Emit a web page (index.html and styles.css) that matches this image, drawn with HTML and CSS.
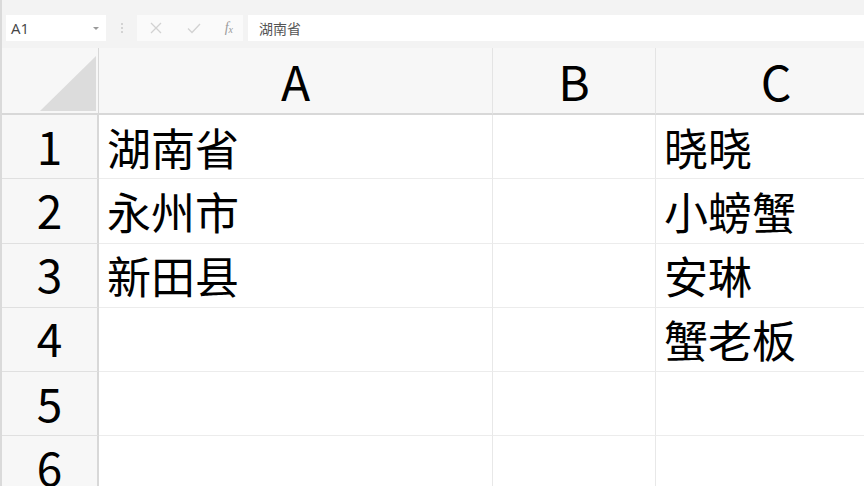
FILE: index.html
```html
<!DOCTYPE html>
<html>
<head>
<meta charset="utf-8">
<link rel="stylesheet" href="styles.css">
</head>
<body>
<div class="app">
  <div class="toolbar">
    <div class="namebox">
      <span class="ref">A1</span>
      <svg class="caret" width="8" height="5" viewBox="0 0 8 5"><path d="M1 1 L4 4 L7 1 Z" fill="#9a9a9a"/></svg>
    </div>
    <div class="grip"><span></span><span></span><span></span></div>
    <div class="fxgroup">
      <svg width="14" height="14" viewBox="0 0 14 14"><path d="M2 2 L12 12 M12 2 L2 12" stroke="#d2d2d2" stroke-width="1.3" fill="none"/></svg>
      <svg width="16" height="14" viewBox="0 0 16 14"><path d="M2 7.5 L6 11.5 L14 3" stroke="#d2d2d2" stroke-width="1.3" fill="none"/></svg>
      <span class="fx">f<sub>x</sub></span>
    </div>
    <div class="formula">湖南省</div>
  </div>
  <div class="sheet">
    <div class="corner"><div class="tri"></div></div>
    <div class="colhead">A</div>
    <div class="colhead">B</div>
    <div class="colhead last">C</div>

    <div class="rowhead">1</div>
    <div class="cell">湖南省</div>
    <div class="cell"></div>
    <div class="cell last">晓晓</div>

    <div class="rowhead">2</div>
    <div class="cell">永州市</div>
    <div class="cell"></div>
    <div class="cell last">小螃蟹</div>

    <div class="rowhead">3</div>
    <div class="cell">新田县</div>
    <div class="cell"></div>
    <div class="cell last">安琳</div>

    <div class="rowhead">4</div>
    <div class="cell"></div>
    <div class="cell"></div>
    <div class="cell last">蟹老板</div>

    <div class="rowhead">5</div>
    <div class="cell"></div>
    <div class="cell"></div>
    <div class="cell last"></div>

    <div class="rowhead">6</div>
    <div class="cell"></div>
    <div class="cell"></div>
    <div class="cell last"></div>
  </div>
</div>
</body>
</html>
```

FILE: styles.css
```css
html, body {
  margin: 0;
  padding: 0;
}
body {
  width: 864px;
  height: 486px;
  overflow: hidden;
  background: #ffffff;
  font-family: "Noto Sans CJK SC", "Noto Sans", sans-serif;
}
.app {
  width: 864px;
  height: 486px;
  overflow: hidden;
  display: flex;
  flex-direction: column;
  border-left: 2px solid #dadada;
  box-sizing: border-box;
}
.toolbar {
  height: 48px;
  flex: none;
  background: #f3f3f3;
  display: flex;
  align-items: flex-start;
  padding-top: 15px;
  box-sizing: border-box;
}
.namebox {
  margin-left: 4px;
  width: 100px;
  height: 26px;
  background: #ffffff;
  display: flex;
  align-items: center;
  justify-content: space-between;
  padding: 0 6px 0 5px;
  box-sizing: border-box;
}
.ref {
  font-family: "Open Sans", "Noto Sans", sans-serif;
  font-size: 15px;
  color: #444444;
}
.caret {
  margin-top: 1px;
}
.grip {
  width: 31px;
  height: 26px;
  display: flex;
  flex-direction: column;
  align-items: center;
  justify-content: center;
  gap: 2px;
}
.grip span {
  width: 2px;
  height: 2px;
  background: #c8c8c8;
  border-radius: 1px;
}
.fxgroup {
  width: 106px;
  height: 26px;
  background: #fafafa;
  display: flex;
  align-items: center;
  justify-content: space-between;
  padding: 0 10px 0 12px;
  box-sizing: border-box;
}
.fx {
  font-family: "Liberation Serif", serif;
  font-style: italic;
  font-size: 14px;
  color: #9a9a9a;
  line-height: 1;
}
.fx sub {
  font-size: 10px;
  vertical-align: -1px;
}
.formula {
  margin-left: 5px;
  flex: 1;
  height: 26px;
  background: #ffffff;
  font-size: 14px;
  color: #555555;
  line-height: 26px;
  padding-left: 11px;
}
.sheet {
  flex: 1;
  display: grid;
  grid-template-columns: 97px 394px 163px 240px;
  grid-template-rows: 67px repeat(6, 64.25px);
  background: #ffffff;
}
.corner {
  background: #f7f7f7;
  border-right: 1px solid #d8d8d8;
  border-bottom: 2px solid #d8d8d8;
  padding: 8px 2px 2px 38px;
  box-sizing: border-box;
}
.tri {
  width: 100%;
  height: 100%;
  background: #dcdcdc;
  clip-path: polygon(100% 0, 100% 100%, 0 100%);
}
.colhead {
  background: #f7f7f7;
  border-right: 1px solid #e4e4e4;
  border-bottom: 2px solid #d8d8d8;
  box-sizing: border-box;
  display: flex;
  align-items: center;
  justify-content: center;
  font-size: 48px;
  color: #000000;
  line-height: 48px;
  padding-bottom: 2px;
}
.rowhead {
  background: #f7f7f7;
  border-right: 2px solid #d8d8d8;
  border-bottom: 1px solid #e0e0e0;
  box-sizing: border-box;
  display: flex;
  align-items: center;
  justify-content: center;
  font-size: 46px;
  color: #000000;
  line-height: 46px;
  padding-bottom: 4px;
}
.cell {
  border-right: 1px solid #e8e8e8;
  border-bottom: 1px solid #ececec;
  box-sizing: border-box;
  display: flex;
  align-items: center;
  padding-left: 8px;
  font-size: 44px;
  color: #000000;
  line-height: 44px;
  white-space: nowrap;
}
.last {
  border-right: none;
}
```
